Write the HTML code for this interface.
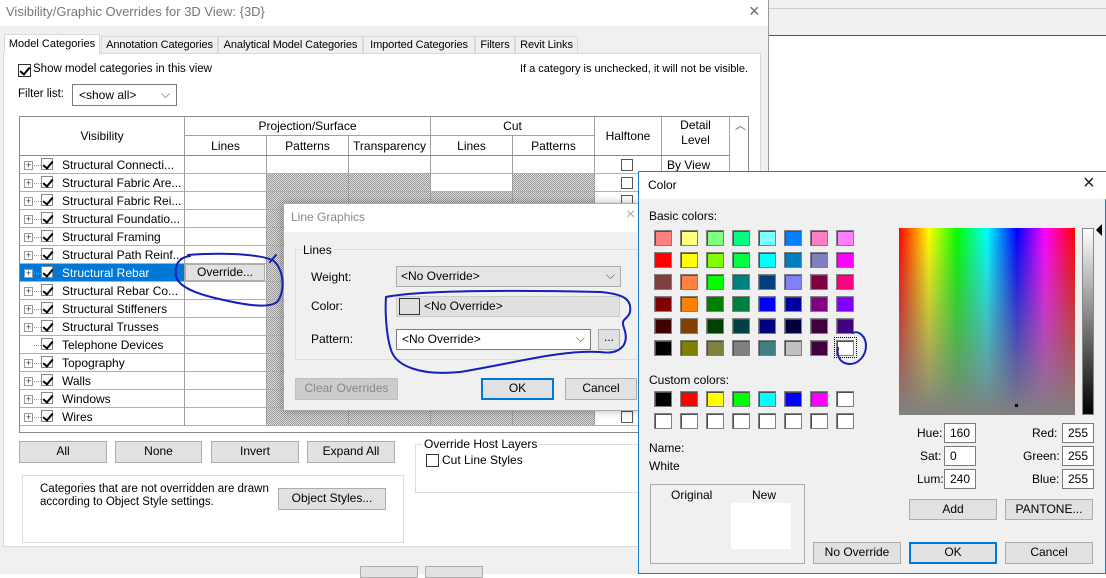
<!DOCTYPE html>
<html><head><meta charset="utf-8"><style>
*{box-sizing:border-box;margin:0;padding:0}
body{width:1106px;height:574px;overflow:hidden;position:relative;background:#fff;font:12px "Liberation Sans",sans-serif;color:#000;white-space:nowrap}
.a{position:absolute}
.btn{position:absolute;background:#e1e1e1;border:1px solid #adadad;text-align:center;font-size:12px;line-height:19px}
.cb{position:absolute;width:13px;height:13px;border:1px solid #333;background:#fff}
.ck::after{content:"";position:absolute;left:3px;top:0px;width:4px;height:8px;border:solid #000;border-width:0 2px 2px 0;transform:rotate(40deg)}
.h{background:repeating-conic-gradient(#9a9a9a 0 25%,#dcdcdc 0 50%) 0 0/2px 2px}
.cell{position:absolute;border-right:1px solid #a0a0a0;border-bottom:1px solid #a0a0a0}
.sw{position:absolute;width:18px;height:16px;border:1px solid #808080;box-shadow:inset 1px 1px 0 #505050}
.in{position:absolute;background:#fff;border:1px solid #7a7a7a;font-size:12px;padding-left:5px;line-height:18px}
.tab{position:absolute;top:36px;height:17px;border:1px solid #d9d9d9;border-bottom:none;font-size:11px;text-align:center;padding-top:2px;letter-spacing:-0.1px}
</style></head><body>
<div class="a" style="left:768px;top:0;width:338px;height:36px;background:#f0f0f0;border-bottom:1px solid #555"></div>
<div class="a" style="left:768px;top:8px;width:338px;height:1px;background:#ccc"></div>

<div class="a" style="left:0;top:0;width:769px;height:574px;background:#f0f0f0;border-right:1px solid #999"></div>
<div class="a" style="left:0;top:0;width:768px;height:26px;background:#fff"></div>
<div class="a" style="left:6px;top:4px;font-size:13px;color:#777">Visibility/Graphic Overrides for 3D View: {3D}</div>
<div class="a" style="left:749px;top:1px;font-size:18px;color:#666">×</div>
<div class="a" style="left:3px;top:53px;width:758px;height:494px;background:#fff;border:1px solid #d9d9d9"></div>
<div class="a" style="left:4px;top:34px;width:96px;height:20px;background:#fff;border:1px solid #d9d9d9;border-bottom:none;padding:3px 0 0 0;text-align:center;font-size:11px">Model Categories</div>
<div class="tab" style="left:101px;width:117px">Annotation Categories</div>
<div class="tab" style="left:218px;width:145px">Analytical Model Categories</div>
<div class="tab" style="left:363px;width:112px">Imported Categories</div>
<div class="tab" style="left:475px;width:40px">Filters</div>
<div class="tab" style="left:515px;width:63px">Revit Links</div>

<div class="cb ck" style="left:18px;top:64px"></div>
<div class="a" style="left:33px;top:63px;font-size:11.5px">Show model categories in this view</div>
<div class="a" style="right:358px;top:63px;font-size:11px">If a category is unchecked, it will not be visible.</div>
<div class="a" style="left:18px;top:88px;font-size:11.5px">Filter list:</div>
<div class="a" style="left:72px;top:84px;width:105px;height:22px;border:1px solid #7a7a7a;background:#fff;padding:3px 0 0 6px">&lt;show all&gt;<span class="a" style="right:6px;top:2px;color:#555">⌵</span></div>

<div class="a" style="left:19px;top:116px;width:730px;height:317px;border:1px solid #888;background:#fff"></div>
<div class="cell" style="left:20px;top:117px;width:165px;height:39px;text-align:center;padding-top:12px">Visibility</div>
<div class="cell" style="left:185px;top:117px;width:246px;height:19px;text-align:center;padding-top:2px">Projection/Surface</div>
<div class="cell" style="left:431px;top:117px;width:164px;height:19px;text-align:center;padding-top:2px">Cut</div>
<div class="cell" style="left:185px;top:136px;width:82px;height:20px;text-align:center;padding-top:3px">Lines</div>
<div class="cell" style="left:267px;top:136px;width:82px;height:20px;text-align:center;padding-top:3px">Patterns</div>
<div class="cell" style="left:349px;top:136px;width:82px;height:20px;text-align:center;padding-top:3px">Transparency</div>
<div class="cell" style="left:431px;top:136px;width:82px;height:20px;text-align:center;padding-top:3px">Lines</div>
<div class="cell" style="left:513px;top:136px;width:82px;height:20px;text-align:center;padding-top:3px">Patterns</div>
<div class="cell" style="left:595px;top:117px;width:67px;height:39px;text-align:center;padding-top:12px">Halftone</div>
<div class="cell" style="left:662px;top:117px;width:68px;height:39px;text-align:center;padding-top:1px;line-height:15px">Detail<br>Level</div>
<div class="a" style="left:735px;top:117px;color:#555;font-size:11px">︿</div>
<div class="a" style="left:20px;top:155px;width:710px;height:1px;background:#888"></div>

<div class="a h" style="left:267px;top:174px;width:164px;height:252px"></div>
<div class="a h" style="left:513px;top:174px;width:82px;height:252px"></div>
<div class="a h" style="left:431px;top:192px;width:82px;height:234px"></div>

<div class="a" style="left:20px;top:264px;width:165px;height:18px;background:#0078d7"></div>
<div id="rows"></div>
<div class="btn" style="left:185px;top:264px;width:80px;height:17px;line-height:15px;font-size:12px">Override...</div>
<div class="a" style="left:667px;top:158px">By View</div>

<script>
var names=["Structural Connecti...","Structural Fabric Are...","Structural Fabric Rei...","Structural Foundatio...","Structural Framing","Structural Path Reinf...","Structural Rebar","Structural Rebar Co...","Structural Stiffeners","Structural Trusses","Telephone Devices","Topography","Walls","Windows","Wires"];
var h="";
var cols=[20,185,267,349,431,513,595,662];
for(var i=0;i<15;i++){var y=156+i*18;
 h+='<div class="a" style="left:20px;top:'+(y+17)+'px;width:710px;height:1px;background:#b0b0b0"></div>';
 var sel=i==6;
 if(i!=10)h+='<div class="a" style="left:24px;top:'+(y+5)+'px;width:9px;height:9px;border:1px solid #999;background:#fff;font-size:9px;line-height:7px;text-align:center;color:#333">+</div>';
 h+='<div class="a" style="left:34px;top:'+(y+9)+'px;width:7px;border-top:1px dotted #999"></div>';
 h+='<div class="cb ck" style="left:41px;top:'+(y+2)+'px;width:12px;height:12px;border-color:#888"></div>';
 h+='<div class="a" style="left:62px;top:'+(y+2)+'px;color:'+(sel?'#fff':'#000')+'">'+names[i]+'</div>';
 h+='<div class="cb" style="left:621px;top:'+(y+3)+'px;width:12px;height:12px;border-color:#555"></div>';
}
for(var c=1;c<cols.length;c++)h+='<div class="a" style="left:'+(cols[c]-1)+'px;top:156px;width:1px;height:270px;background:#a0a0a0"></div>';
h+='<div class="a" style="left:729px;top:117px;width:1px;height:309px;background:#a0a0a0"></div>';
document.getElementById("rows").innerHTML=h;
</script>

<div class="btn" style="left:19px;top:441px;width:88px;height:22px">All</div>
<div class="btn" style="left:115px;top:441px;width:87px;height:22px">None</div>
<div class="btn" style="left:211px;top:441px;width:88px;height:22px">Invert</div>
<div class="btn" style="left:307px;top:441px;width:88px;height:22px">Expand All</div>
<div class="a" style="left:22px;top:475px;width:382px;height:68px;border:1px solid #dcdcdc"></div>
<div class="a" style="left:40px;top:483px;line-height:13px;font-size:11.5px">Categories that are not overridden are drawn<br>according to Object Style settings.</div>
<div class="btn" style="left:278px;top:488px;width:108px;height:22px">Object Styles...</div>
<div class="a" style="left:415px;top:444px;width:250px;height:49px;border:1px solid #dcdcdc"></div>
<div class="a" style="left:422px;top:437px;background:#fff;padding:0 2px">Override Host Layers</div>
<div class="cb" style="left:426px;top:454px"></div>
<div class="a" style="left:442px;top:453px">Cut Line Styles</div>
<div class="btn" style="left:360px;top:566px;width:58px;height:12px"></div>
<div class="btn" style="left:425px;top:566px;width:58px;height:12px"></div>

<div class="a" style="left:283px;top:203px;width:358px;height:208px;background:#f0f0f0;border:1px solid #aaa;box-shadow:0 0 8px rgba(0,0,0,.3)"></div>
<div class="a" style="left:284px;top:204px;width:356px;height:28px;background:#fff"></div>
<div class="a" style="left:291px;top:210px;color:#888">Line Graphics</div>
<div class="a" style="left:626px;top:206px;color:#aaa;font-size:16px">×</div>
<div class="a" style="left:295px;top:249px;width:346px;height:111px;border:1px solid #dcdcdc"></div>
<div class="a" style="left:302px;top:243px;background:#f0f0f0;padding:0 1px">Lines</div>
<div class="a" style="left:311px;top:270px">Weight:</div>
<div class="a" style="left:396px;top:266px;width:225px;height:21px;background:#e5e5e5;border:1px solid #acacac;padding:2px 0 0 4px">&lt;No Override&gt;<span class="a" style="right:5px;top:1px;color:#555">⌵</span></div>
<div class="a" style="left:311px;top:299px">Color:</div>
<div class="a" style="left:396px;top:296px;width:224px;height:21px;background:#e0e0e0;border:1px solid #ccc"></div>
<div class="a" style="left:399px;top:298px;width:21px;height:17px;border:1px solid #333;background:#e0e0e0"></div>
<div class="a" style="left:424px;top:299px">&lt;No Override&gt;</div>
<div class="a" style="left:311px;top:332px">Pattern:</div>
<div class="a" style="left:396px;top:329px;width:195px;height:21px;background:#fff;border:1px solid #7a7a7a;padding:2px 0 0 5px">&lt;No Override&gt;<span class="a" style="right:5px;top:1px;color:#555">⌵</span></div>
<div class="btn" style="left:598px;top:329px;width:22px;height:21px;line-height:14px">...</div>
<div class="btn" style="left:295px;top:378px;width:103px;height:22px;background:#cccccc;border-color:#bfbfbf;color:#888">Clear Overrides</div>
<div class="btn" style="left:481px;top:378px;width:73px;height:22px;border:2px solid #0078d7;line-height:17px">OK</div>
<div class="btn" style="left:565px;top:378px;width:72px;height:22px">Cancel</div>

<div class="a" style="left:638px;top:171px;width:468px;height:403px;background:#f0f0f0;border:1px solid #1a7cd0"></div>
<div class="a" style="left:639px;top:172px;width:467px;height:27px;background:#fff"></div>
<div class="a" style="left:648px;top:178px">Color</div>
<div class="a" style="left:1083px;top:172px;font-size:20px;color:#222">×</div>
<div class="a" style="left:649px;top:209px">Basic colors:</div>
<div class="a" style="left:649px;top:373px">Custom colors:</div>
<div id="sw"></div>
<script>
var C=[["#ff8080","#ffff80","#80ff80","#00ff80","#80ffff","#0080ff","#ff80c0","#ff80ff"],
["#ff0000","#ffff00","#80ff00","#00ff40","#00ffff","#0080c0","#8080c0","#ff00ff"],
["#804040","#ff8040","#00ff00","#008080","#004080","#8080ff","#800040","#ff0080"],
["#800000","#ff8000","#008000","#008040","#0000ff","#0000a0","#800080","#8000ff"],
["#400000","#804000","#004000","#004040","#000080","#000040","#400040","#400080"],
["#000000","#808000","#808040","#808080","#408080","#c0c0c0","#400040","#ffffff"]];
var K=[["#000","#f00","#ff0","#0f0","#0ff","#00f","#f0f","#fff"],["#fff","#fff","#fff","#fff","#fff","#fff","#fff","#fff"]];
var s="";
for(var r=0;r<6;r++)for(var c=0;c<8;c++)s+='<div class="sw" style="left:'+(654+c*26)+'px;top:'+(230+r*22)+'px;background:'+C[r][c]+'"></div>';
for(var r=0;r<2;r++)for(var c=0;c<8;c++)s+='<div class="sw" style="left:'+(654+c*26)+'px;top:'+(391+r*22)+'px;background:'+K[r][c]+'"></div>';
s+='<div class="a" style="left:834px;top:337px;width:23px;height:21px;border:1px dotted #000"></div>';
document.getElementById("sw").innerHTML=s;
</script>
<div class="a" style="left:899px;top:228px;width:176px;height:187px;background:linear-gradient(to bottom,rgba(128,128,128,0),#808080),linear-gradient(to right,#f00,#ff0 17%,#0f0 33%,#0ff 50%,#00f 67%,#f0f 83%,#f00)"></div>
<div class="a" style="left:1082px;top:228px;width:12px;height:187px;background:linear-gradient(#fff,#000);border:1px solid #888"></div>
<div class="a" style="left:1096px;top:224px;width:0;height:0;border:6px solid transparent;border-right-color:#000;border-left:0"></div>
<div class="a" style="left:1015px;top:404px;width:3px;height:3px;background:#000"></div>
<div class="a" style="left:917px;top:426px">Hue:</div>
<div class="in" style="left:944px;top:423px;width:32px;height:20px">160</div>
<div class="a" style="left:920px;top:449px">Sat:</div>
<div class="in" style="left:944px;top:446px;width:32px;height:20px">0</div>
<div class="a" style="left:917px;top:472px">Lum:</div>
<div class="in" style="left:944px;top:469px;width:32px;height:20px">240</div>
<div class="a" style="left:1032px;top:426px">Red:</div>
<div class="in" style="left:1062px;top:423px;width:32px;height:20px">255</div>
<div class="a" style="left:1023px;top:449px">Green:</div>
<div class="in" style="left:1062px;top:446px;width:32px;height:20px">255</div>
<div class="a" style="left:1032px;top:472px">Blue:</div>
<div class="in" style="left:1062px;top:469px;width:32px;height:20px">255</div>
<div class="btn" style="left:909px;top:499px;width:88px;height:21px">Add</div>
<div class="btn" style="left:1005px;top:499px;width:88px;height:21px">PANTONE...</div>
<div class="a" style="left:649px;top:441px">Name:</div>
<div class="a" style="left:649px;top:459px">White</div>
<div class="a" style="left:650px;top:484px;width:155px;height:80px;border:1px solid #aaa"></div>
<div class="a" style="left:671px;top:488px">Original</div>
<div class="a" style="left:752px;top:488px">New</div>
<div class="a" style="left:731px;top:503px;width:60px;height:46px;background:#fff"></div>
<div class="btn" style="left:813px;top:542px;width:88px;height:22px">No Override</div>
<div class="btn" style="left:909px;top:542px;width:88px;height:22px;border:2px solid #0078d7;line-height:17px">OK</div>
<div class="btn" style="left:1005px;top:542px;width:88px;height:22px">Cancel</div>

<svg class="a" style="left:0;top:0" width="1106" height="574" fill="none" stroke="#1520b8" stroke-width="2" stroke-linecap="round">
<path d="M188 255 C230 252 268 255 275 262 C284 272 285 290 278 301 C270 310 240 304 215 298 C190 292 178 285 176 276 C174 264 180 257 190 256 M270 262 L276 255"/>
<path d="M386 297 C420 290 520 290 600 292 C625 294 632 300 630 312 C628 320 620 318 624 328 C630 345 620 355 600 352 C560 350 520 362 460 372 C420 376 396 366 391 350 C386 335 385 310 386 297"/>
<path d="M853 333 C858 330 866 336 866 346 C866 356 858 364 850 364 C842 364 836 358 838 348"/>
</svg>
</body></html>
